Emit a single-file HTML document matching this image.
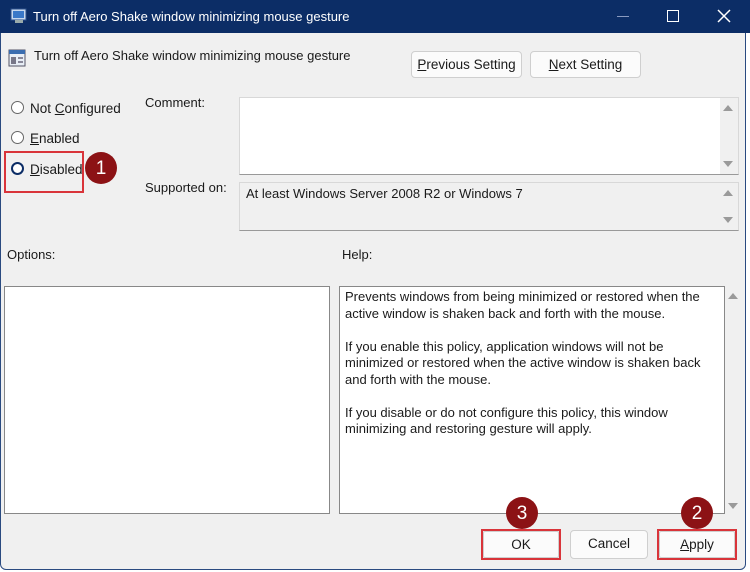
<!DOCTYPE html>
<html><head><style>
*{margin:0;padding:0;box-sizing:border-box}
body{width:750px;height:572px;background:#fff;font-family:"Liberation Sans",sans-serif;font-size:13px;color:#1a1a1a;position:relative;overflow:hidden}
.win{position:absolute;left:0;top:0;width:746px;height:570px;background:#f0f0f0;border:1px solid #2a4a80;border-radius:0 0 6px 6px}
.a{position:absolute}
.tb{left:0;top:0;width:750px;height:33px;background:#0c2d66;color:#fff}
.btn{position:absolute;background:#fbfbfb;border:1px solid #cfcfcf;border-radius:4px;text-align:center;line-height:26px;font-size:13.5px}
.box{position:absolute;background:#fff;border:1px solid #a9a9a9}
.rad{position:absolute;width:13px;height:13px;border:1px solid #666;border-radius:50%;background:#fff}
.red{position:absolute;border:2px solid #d9343a}
.badge{position:absolute;width:32px;height:32px;border-radius:50%;background:#8c1215;color:#fff;font-size:19px;text-align:center;line-height:33px}
.up,.dn{position:absolute;width:0;height:0;border-left:5px solid transparent;border-right:5px solid transparent}
.up{border-bottom:6px solid #9a9a9a}.dn{border-top:6px solid #9a9a9a}
u{text-decoration:underline}
</style></head><body>
<div class="win"></div>
<div class="a tb">
<svg class="a" style="left:10px;top:8px" width="18" height="16"><rect x="1" y="1" width="15" height="11" fill="#c8d8ee" stroke="#2b4f8a"/><rect x="3" y="3" width="11" height="7" fill="#3a78c8"/><rect x="5" y="12" width="8" height="3" fill="#9aa"/></svg>
<div class="a" style="left:33px;top:9px;font-size:13px">Turn off Aero Shake window minimizing mouse gesture</div>
<div class="a" style="left:617px;top:16px;width:12px;height:1px;background:#8a9ac0"></div>
<div class="a" style="left:667px;top:10px;width:12px;height:12px;border:1.5px solid #fff"></div>
<svg class="a" style="left:717px;top:9px" width="14" height="14"><path d="M1 1L13 13M13 1L1 13" stroke="#fff" stroke-width="1.5"/></svg>
</div>
<svg class="a" style="left:8px;top:49px" width="18" height="18"><rect x="1" y="1" width="16" height="16" fill="#e8eef6" stroke="#556"/><rect x="1" y="1" width="16" height="4" fill="#3a6db0"/><rect x="3" y="8" width="5" height="7" fill="#778"/><rect x="10" y="8" width="5" height="2" fill="#889"/><rect x="10" y="12" width="5" height="2" fill="#889"/></svg>
<div class="a" style="left:34px;top:48px;font-size:13px">Turn off Aero Shake window minimizing mouse gesture</div>
<div class="btn" style="left:411px;top:51px;width:111px;height:27px"><u>P</u>revious Setting</div>
<div class="btn" style="left:530px;top:51px;width:111px;height:27px"><u>N</u>ext Setting</div>
<div class="rad" style="left:11px;top:101px"></div><div class="a" style="left:30px;top:101px;font-size:13.5px">Not <u>C</u>onfigured</div>
<div class="rad" style="left:11px;top:131px"></div><div class="a" style="left:30px;top:131px;font-size:13.5px"><u>E</u>nabled</div>
<div class="rad" style="left:11px;top:162px;border:2px solid #0c2d66"></div><div class="a" style="left:30px;top:162px;font-size:13.5px"><u>D</u>isabled</div>
<div class="red" style="left:4px;top:151px;width:80px;height:42px"></div>
<div class="badge" style="left:85px;top:152px">1</div>
<div class="a" style="left:145px;top:95px">Comment:</div>
<div class="box" style="left:239px;top:97px;width:500px;height:78px;border-color:#d8d8d8;border-bottom-color:#999"></div>
<div class="a" style="left:720px;top:98px;width:18px;height:76px;background:#f0f0f0"></div>
<div class="up" style="left:723px;top:105px"></div><div class="dn" style="left:723px;top:161px"></div>
<div class="a" style="left:145px;top:180px">Supported on:</div>
<div class="box" style="left:239px;top:182px;width:500px;height:49px;background:#f0f0f0;border-color:#d8d8d8;border-bottom-color:#999"></div>
<div class="a" style="left:246px;top:186px">At least Windows Server 2008 R2 or Windows 7</div>
<div class="up" style="left:723px;top:190px"></div><div class="dn" style="left:723px;top:217px"></div>
<div class="a" style="left:7px;top:247px">Options:</div>
<div class="a" style="left:342px;top:247px">Help:</div>
<div class="box" style="left:4px;top:286px;width:326px;height:228px;border-color:#888"></div>
<div class="box" style="left:339px;top:286px;width:386px;height:228px;border-color:#888"></div>
<div class="a" style="left:345px;top:289px;width:378px;line-height:16.5px">Prevents windows from being minimized or restored when the active window is shaken back and forth with the mouse.<br><br>If you enable this policy, application windows will not be minimized or restored when the active window is shaken back and forth with the mouse.<br><br>If you disable or do not configure this policy, this window minimizing and restoring gesture will apply.</div>
<div class="up" style="left:728px;top:293px"></div><div class="dn" style="left:728px;top:503px"></div>
<div class="btn" style="left:483px;top:531px;width:76px;height:27px;border-radius:2px">OK</div>
<div class="btn" style="left:570px;top:530px;width:78px;height:29px">Cancel</div>
<div class="btn" style="left:659px;top:531px;width:76px;height:27px;border-radius:2px"><u>A</u>pply</div>
<div class="red" style="left:481px;top:529px;width:80px;height:31px"></div>
<div class="red" style="left:657px;top:529px;width:80px;height:31px"></div>
<div class="badge" style="left:506px;top:497px">3</div>
<div class="badge" style="left:681px;top:497px">2</div>
</body></html>
